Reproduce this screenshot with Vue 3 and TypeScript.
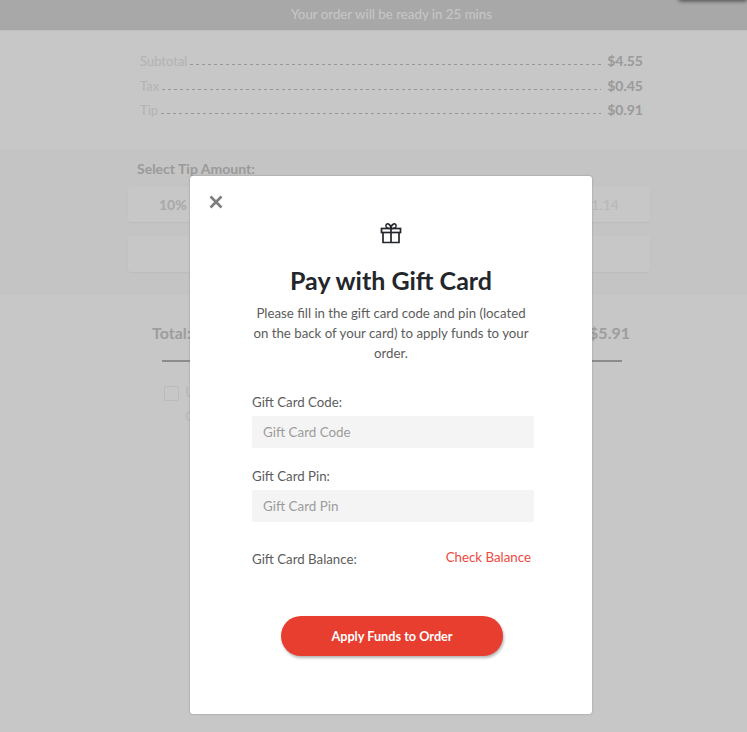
<script setup lang="ts">
const rows = [
  { label: 'Subtotal', value: '$4.55' },
  { label: 'Tax', value: '$0.45' },
  { label: 'Tip', value: '$0.91' },
]
</script>

<template>
  <div class="page">
    <div class="corner"></div>
    <header class="banner">Your order will be ready in 25 mins</header>

    <section class="summary">
      <div v-for="row in rows" :key="row.label" class="row">
        <span class="row-label">{{ row.label }}</span>
        <span class="dots"></span>
        <span class="row-value">{{ row.value }}</span>
      </div>
    </section>

    <section class="tips">
      <h3 class="tips-title">Select Tip Amount:</h3>
      <div class="tip-box tip-options">
        <span class="tip-pct">10%</span>
        <span class="tip-amt">$1.14</span>
      </div>
      <div class="tip-box tip-custom"></div>
    </section>

    <section class="totals">
      <div class="total-row">
        <span>Total:</span>
        <span>$5.91</span>
      </div>
      <div class="total-rule"></div>
      <div class="use-credit">
        <span class="checkbox"></span>
        <span class="use-text">U<br />C</span>
      </div>
    </section>

    <div class="overlay">
      <div class="modal">
        <button class="close" type="button" aria-label="Close">
          <svg width="14" height="14" viewBox="0 0 14 14" fill="none">
            <path d="M1.5 1.5 12.5 12.5M12.5 1.5 1.5 12.5" stroke="#7d7d7d" stroke-width="2.6" />
          </svg>
        </button>

        <svg class="gift" width="22" height="22" viewBox="0 0 22 22" fill="none" stroke="#23262b" stroke-width="1.7">
          <rect x="1.5" y="6.5" width="19" height="4" />
          <path d="M3 10.5V20.5H19V10.5M11 6.5V20.5" />
          <path d="M11 6.5C9 6.5 6.6 6 6 4.4 5.5 2.8 7 1.4 8.4 2 10 2.7 11 5 11 6.5ZM11 6.5C13 6.5 15.4 6 16 4.4 16.5 2.8 15 1.4 13.6 2 12 2.7 11 5 11 6.5Z" stroke-width="1.5" />
        </svg>

        <h2 class="title">Pay with Gift Card</h2>
        <p class="desc">Please fill in the gift card code and pin (located on the back of your card) to apply funds to your order.</p>

        <form class="form" @submit.prevent>
          <label class="field">
            <span class="label">Gift Card Code:</span>
            <input class="input" type="text" placeholder="Gift Card Code" />
          </label>
          <label class="field">
            <span class="label">Gift Card Pin:</span>
            <input class="input" type="text" placeholder="Gift Card Pin" />
          </label>
          <div class="balance">
            <span class="label balance-label">Gift Card Balance:</span>
            <a class="check" href="#" @click.prevent>Check Balance</a>
          </div>
        </form>

        <button class="apply" type="button">Apply Funds to Order</button>
      </div>
    </div>
  </div>
</template>

<style>
html,
body {
  margin: 0;
  background: #fff;
}
</style>

<style scoped>
.page {
  position: relative;
  width: 747px;
  height: 732px;
  overflow: hidden;
  background: #fff;
  font-family: Lato, "Open Sans", sans-serif;
  color: #23262b;
}
.corner {
  position: absolute;
  top: -6px;
  right: 0;
  width: 68px;
  height: 6px;
  box-shadow: 0 1px 4px rgba(0, 0, 0, 0.6);
}
.banner {
  height: 30px;
  background: #d8d8d8;
  border-bottom: 1px solid #f4f4f4;
  color: #fff;
  text-align: center;
  font-size: 13.3px;
  line-height: 28px;
  padding-left: 36px;
}
.summary {
  padding: 20px 104px 0 140px;
  height: 119px;
  box-sizing: border-box;
}
.row {
  display: flex;
  align-items: baseline;
  height: 24.5px;
  line-height: 20px;
}
.row-label {
  font-size: 13px;
  color: #e6e6e6;
}
.dots {
  flex: 1;
  height: 1px;
  margin: 0 6px 0 3px;
  background: repeating-linear-gradient(to right, #c2c2c2 0 3px, transparent 3px 6px);
  transform: translateY(-1px);
}
.row-value {
  font-size: 14px;
  font-weight: 700;
  color: #c6c6c6;
}
.tips {
  height: 145px;
  box-sizing: border-box;
  background: #fcfcfc;
  padding: 10px 96px 0 137px;
}
.tips-title {
  margin: 0 0 9px;
  font-size: 14px;
  line-height: 18px;
  font-weight: 700;
  color: #c6c6c6;
}
.tip-box {
  width: 522px;
  margin-left: -9px;
  background: #fff;
  border-radius: 3px;
  box-shadow: 0 1px 2px rgba(0, 0, 0, 0.05);
  box-sizing: border-box;
}
.tip-options {
  display: flex;
  justify-content: space-between;
  align-items: center;
  height: 35px;
  padding: 0 31px;
  margin-bottom: 14px;
  font-size: 14px;
}
.tip-custom {
  height: 36px;
}
.tip-pct {
  font-weight: 700;
  color: #d8d8d8;
}
.tip-amt {
  color: #ececec;
}
.totals {
  padding: 27px 117px 0 152px;
}
.total-row {
  display: flex;
  justify-content: space-between;
  font-size: 16px;
  font-weight: 700;
  color: #cacaca;
  line-height: 22px;
}
.total-rule {
  margin: 16px 8px 0 10px;
  height: 2px;
  background: #b4b4b4;
}
.use-credit {
  display: flex;
  gap: 6px;
  margin: 24px 0 0 12px;
  font-size: 14px;
  color: #ececec;
  line-height: 24px;
}
.checkbox {
  width: 13px;
  height: 13px;
  border: 1px solid #f0f0f0;
  border-radius: 1px;
}
.use-text {
  margin-top: -6px;
}
.overlay {
  position: absolute;
  inset: 0;
  background: rgba(0, 0, 0, 0.22);
}
.modal {
  position: absolute;
  left: 190px;
  top: 176px;
  width: 402px;
  height: 538px;
  box-sizing: border-box;
  padding: 46px 60px 0;
  background: #fff;
  border-radius: 3px;
  box-shadow: 0 0 2px rgba(0, 0, 0, 0.3);
  display: flex;
  flex-direction: column;
  align-items: center;
}
.close {
  position: absolute;
  top: 19px;
  left: 19px;
  padding: 0;
  border: 0;
  background: none;
  width: 14px;
  height: 14px;
  display: block;
}
.close svg {
  display: block;
}
.gift {
  display: block;
  flex: none;
}
.title {
  margin: 21px 0 0;
  font-size: 25px;
  line-height: 30px;
  font-weight: 700;
  color: #23262b;
  white-space: nowrap;
}
.desc {
  margin: 9px 0 0;
  width: 282px;
  text-align: center;
  font-size: 13.25px;
  line-height: 19.75px;
  color: #5c5c5c;
}
.form {
  align-self: flex-start;
  width: 282px;
  margin: 31px 0 0 2px;
}
.field {
  display: block;
  margin-bottom: 20px;
}
.label {
  display: block;
  font-size: 13.25px;
  line-height: 16px;
  color: #5c5c5c;
}
.input {
  display: block;
  width: 100%;
  height: 32px;
  margin-top: 6px;
  box-sizing: border-box;
  border: 0;
  border-radius: 2px;
  background: #f4f4f4;
  padding: 0 11px;
  font: 13.4px Lato, "Open Sans", sans-serif;
  color: #4a4a4a;
}
.input::placeholder {
  color: #9c9c9c;
  opacity: 1;
}
.balance {
  display: flex;
  justify-content: space-between;
  align-items: flex-start;
  margin-top: 27px;
  padding-right: 3px;
}
.balance-label {
  margin-top: 2px;
}
.check {
  font-size: 13.3px;
  line-height: 16px;
  color: #f0483e;
  text-decoration: none;
}
.apply {
  margin: 49px 0 0 2px;
  width: 222px;
  height: 40px;
  flex: none;
  border: 0;
  border-radius: 20px;
  background: #e73e2f;
  color: #fff;
  font: 700 12.7px Lato, "Open Sans", sans-serif;
  box-shadow: 1px 2px 3px rgba(0, 0, 0, 0.3);
}
</style>
